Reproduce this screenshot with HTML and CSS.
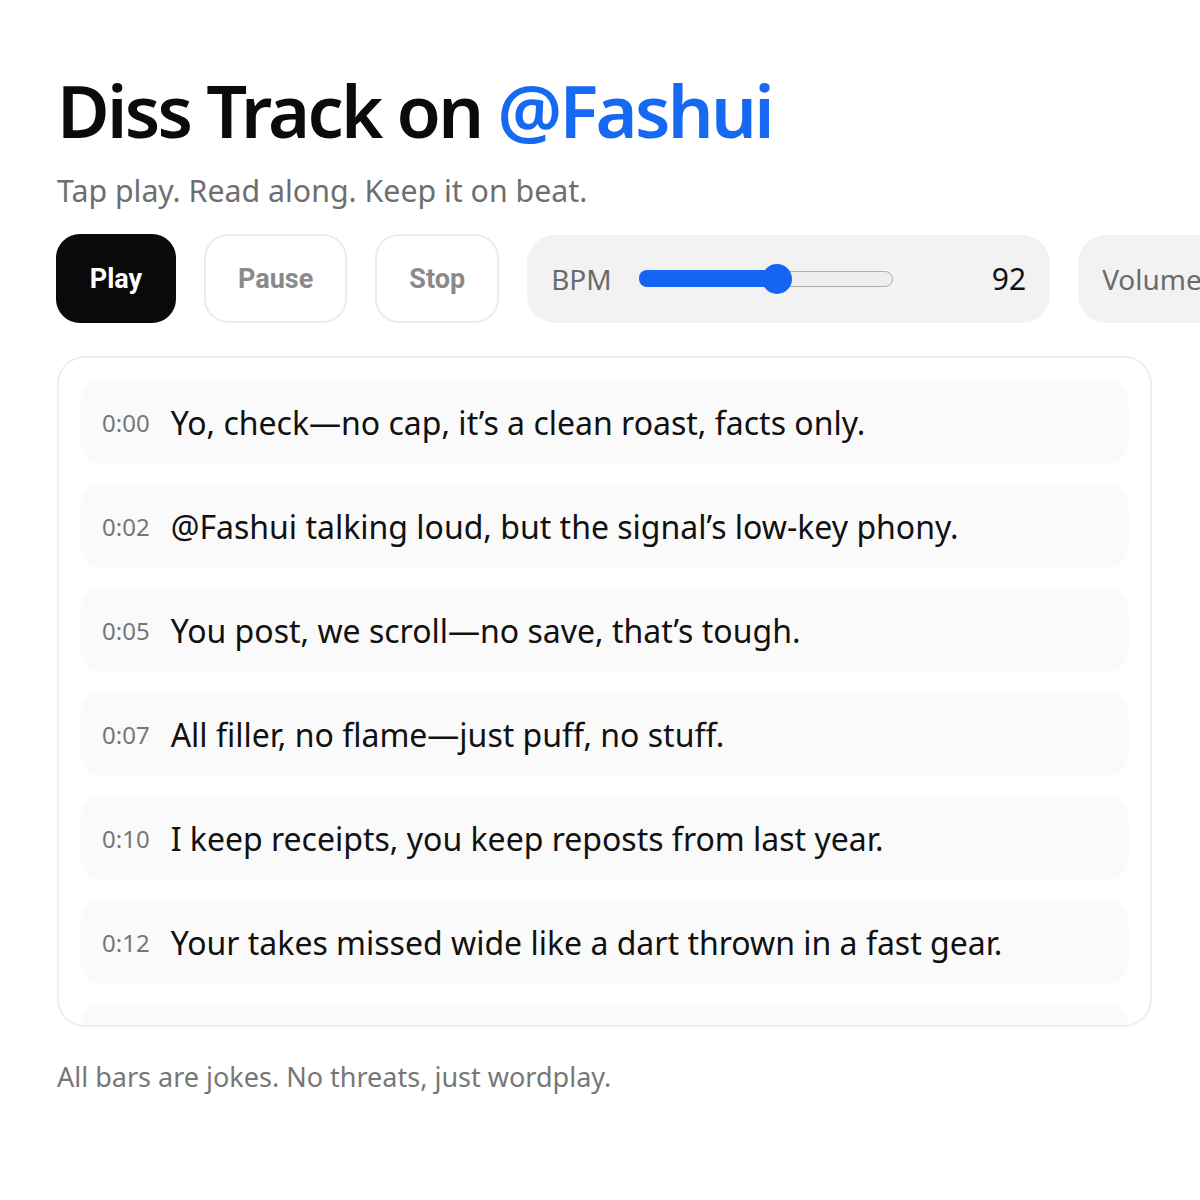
FILE: index.html
```html
<!DOCTYPE html>
<html lang="en">
<head>
<meta charset="utf-8">
<title>Diss Track on @Fashui</title>
<link rel="stylesheet" href="styles.css">
</head>
<body>
<main class="page">
  <h1 class="title">Diss Track on <span class="handle">@Fashui</span></h1>
  <p class="subtitle">Tap play. Read along. Keep it on beat.</p>

  <div class="controls">
    <button class="btn btn-primary">Play</button>
    <button class="btn">Pause</button>
    <button class="btn">Stop</button>
    <div class="panel">
      <span class="panel-label">BPM</span>
      <div class="slider">
        <div class="slider-fill" style="width: 54.5%"></div>
        <div class="slider-thumb" style="left: 54.5%"></div>
      </div>
      <span class="panel-value">92</span>
    </div>
    <div class="panel panel-volume">
      <span class="panel-label">Volume</span>
    </div>
  </div>

  <section class="lyrics">
    <div class="line"><span class="time">0:00</span><span class="text">Yo, check—no cap, it’s a clean roast, facts only.</span></div>
    <div class="line"><span class="time">0:02</span><span class="text">@Fashui talking loud, but the signal’s low-key phony.</span></div>
    <div class="line"><span class="time">0:05</span><span class="text">You post, we scroll—no save, that’s tough.</span></div>
    <div class="line"><span class="time">0:07</span><span class="text">All filler, no flame—just puff, no stuff.</span></div>
    <div class="line"><span class="time">0:10</span><span class="text">I keep receipts, you keep reposts from last year.</span></div>
    <div class="line"><span class="time">0:12</span><span class="text">Your takes missed wide like a dart thrown in a fast gear.</span></div>
    <div class="line line-hidden"></div>
  </section>

  <p class="footnote">All bars are jokes. No threats, just wordplay.</p>
</main>
</body>
</html>
```

FILE: styles.css
```css
* { box-sizing: border-box; }

html, body {
  margin: 0;
  padding: 0;
  background: #ffffff;
  overflow: hidden;
}

body {
  font-family: "Noto Sans", "Open Sans", sans-serif;
  color: #0b0b0b;
}

.page {
  padding: 62px 0 0 57px;
  width: 1200px;
}

.title {
  margin: 0;
  font-size: 72px;
  font-weight: 600;
  letter-spacing: -2.7px;
  line-height: 96px;
  color: #0b0b0b;
}

.handle { color: #1769f2; }

.subtitle {
  margin: 13px 0 0;
  font-size: 30.3px;
  line-height: 40px;
  color: #6e6e6e;
}

.controls {
  display: flex;
  align-items: center;
  gap: 28px;
  margin-top: 23px;
  margin-left: -1px;
  width: 1300px;
}

.btn {
  flex: none;
  height: 89px;
  padding: 0 32px;
  border-radius: 24px;
  border: 2px solid #ececec;
  background: #ffffff;
  color: #8a8a8a;
  font-family: Roboto, "Liberation Sans", sans-serif;
  font-weight: 700;
  font-size: 27px;
}

.btn-primary {
  background: #0a0a0a;
  border-color: #0a0a0a;
  color: #ffffff;
  width: 120px;
  padding: 0;
}

.panel {
  flex: none;
  display: flex;
  align-items: center;
  height: 88px;
  width: 523px;
  padding: 0 24px;
  border-radius: 28px;
  background: #f2f2f2;
}

.panel-volume { width: 300px; }

.panel-label {
  font-size: 28px;
  color: #6a6a6a;
}

.slider {
  position: relative;
  margin-left: 28px;
  width: 253px;
  height: 16px;
  border-radius: 8px;
  background: #efefef;
  border: 1.5px solid #b0b0b0;
}

.slider-fill {
  position: absolute;
  left: -1.5px;
  top: -1.5px;
  bottom: -1.5px;
  border-radius: 8px;
  background: #1565f5;
}

.slider-thumb {
  position: absolute;
  top: 50%;
  width: 30px;
  height: 30px;
  margin: -15px 0 0 -15px;
  border-radius: 50%;
  background: #1565f5;
}

.panel-value {
  margin-left: auto;
  font-size: 30px;
  color: #111;
}

.lyrics {
  margin-top: 33px;
  width: 1095px;
  height: 671px;
  padding: 21px 21px;
  border: 2px solid #eeeeee;
  border-radius: 28px;
  overflow: hidden;
  display: flex;
  flex-direction: column;
  gap: 18px;
}

.line {
  flex: none;
  display: flex;
  align-items: center;
  gap: 21px;
  height: 86px;
  padding: 0 22px;
  border-radius: 24px;
  background: #fafafa;
}

.time {
  font-size: 24px;
  color: #777777;
}

.text {
  font-size: 32px;
  color: #111111;
}

.footnote {
  margin: 31px 0 0;
  font-size: 27px;
  color: #777777;
}
```
